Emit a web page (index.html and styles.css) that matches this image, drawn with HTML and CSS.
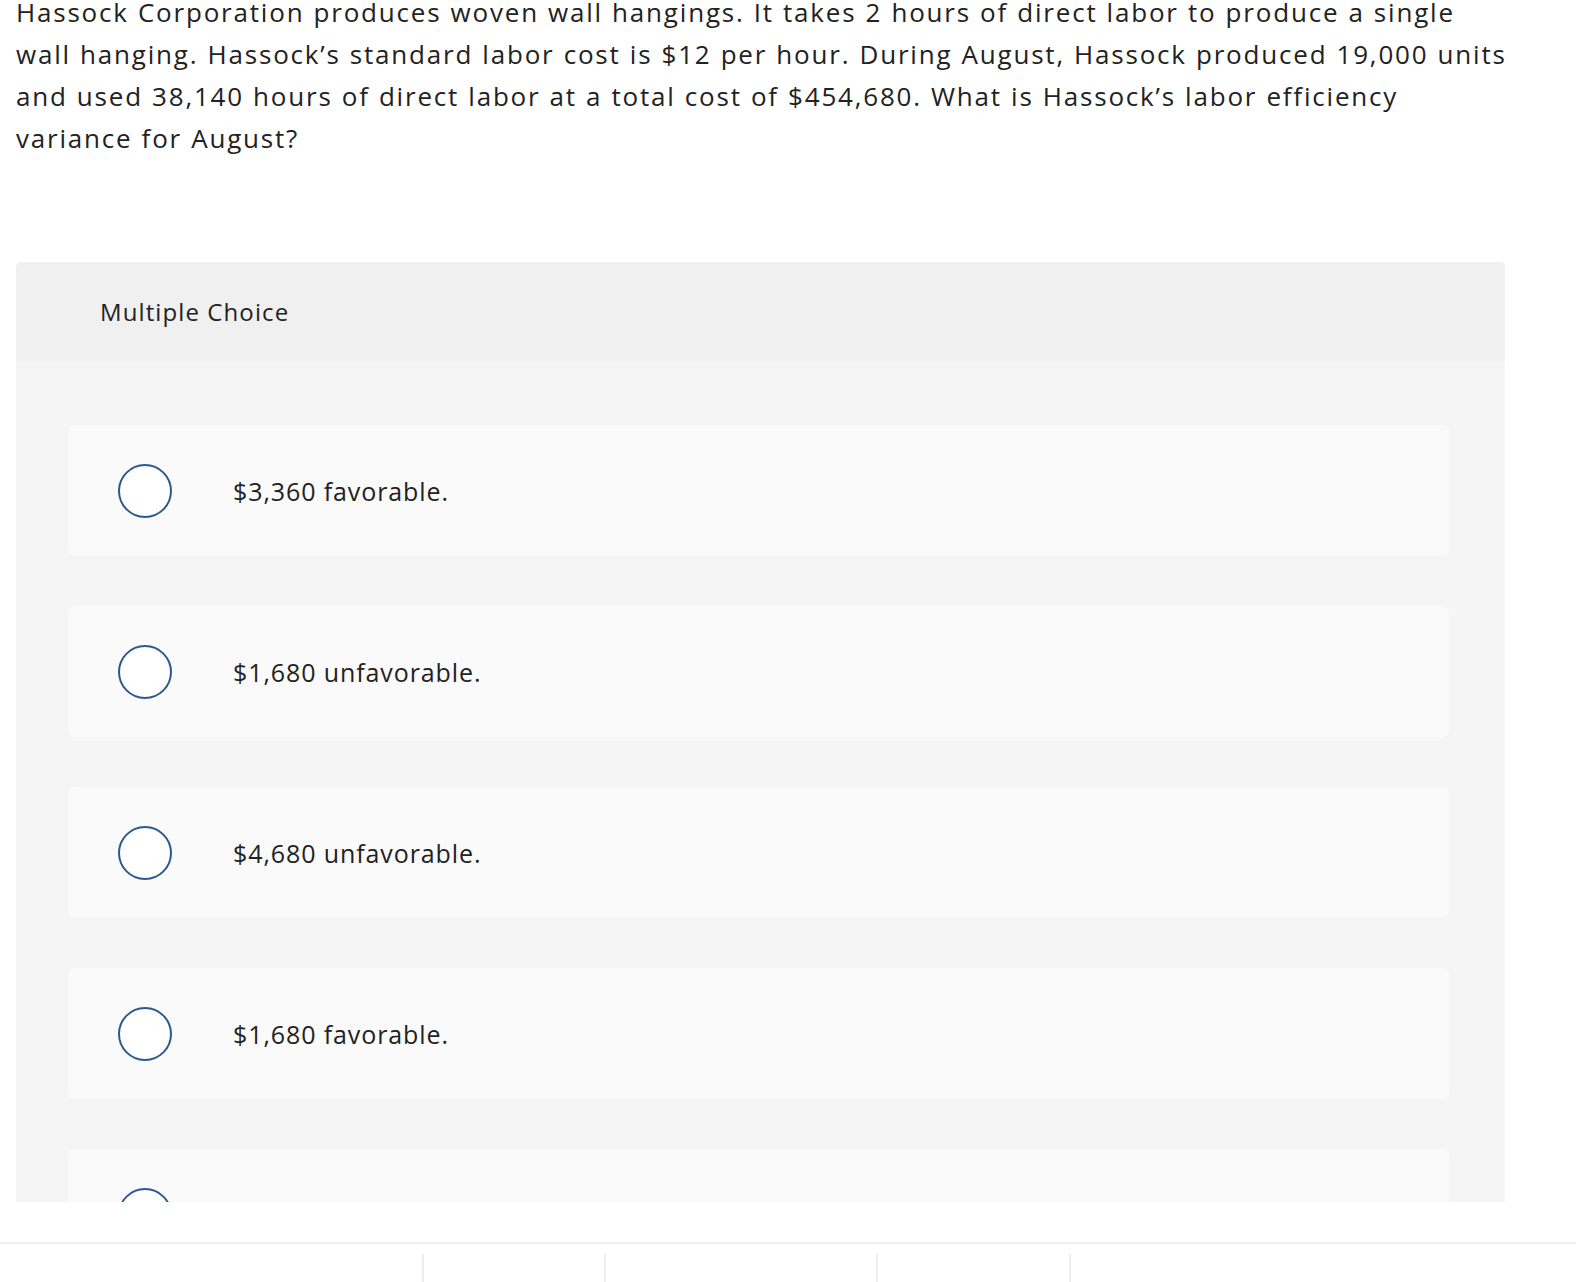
FILE: index.html
```html
<!DOCTYPE html>
<html lang="en">
<head>
<meta charset="utf-8">
<title>Multiple Choice</title>
<link rel="stylesheet" href="styles.css">
</head>
<body>
<main class="page">
  <p class="question">Hassock Corporation produces woven wall hangings. It takes 2 hours of direct labor to produce a single wall hanging. Hassock’s standard labor cost is $12 per hour. During August, Hassock produced 19,000 units and used 38,140 hours of direct labor at a total cost of $454,680. What is Hassock’s labor efficiency variance for August?</p>

  <section class="card">
    <header class="card-head">Multiple Choice</header>
    <div class="card-body">
      <label class="option"><span class="radio"></span><span class="opt-text">$3,360 favorable.</span></label>
      <label class="option"><span class="radio"></span><span class="opt-text">$1,680 unfavorable.</span></label>
      <label class="option"><span class="radio"></span><span class="opt-text">$4,680 unfavorable.</span></label>
      <label class="option"><span class="radio"></span><span class="opt-text">$1,680 favorable.</span></label>
      <label class="option"><span class="radio"></span><span class="opt-text">$3,360 unfavorable.</span></label>
    </div>
  </section>
</main>
<footer class="footer">
  <div class="foot-cell w1"></div>
  <div class="foot-cell w2"></div>
  <div class="foot-cell w3"></div>
  <div class="foot-cell w4"></div>
</footer>
</body>
</html>
```

FILE: styles.css
```css
html, body {
  margin: 0;
  padding: 0;
  background: #ffffff;
  height: 1282px;
  overflow: hidden;
}

body {
  font-family: "Open Sans", "Lato", sans-serif;
  color: #222222;
}

.page {
  width: 1489px;
  margin-left: 16px;
}

.question {
  width: 1500px;
  margin: -9px 0 0 0;
  font-size: 26px;
  letter-spacing: 1.8px;
  word-spacing: 0.6px;
  line-height: 42px;
  color: #222222;
}

.card {
  margin-top: 103px;
  height: 940px;
  overflow: hidden;
  border-radius: 5px 5px 0 0;
  background: #f5f5f5;
}

.card-head {
  height: 99px;
  background: #f0f0f0;
  display: flex;
  align-items: center;
  padding-left: 84px;
  font-size: 24px;
  letter-spacing: 1.1px;
  color: #222222;
}

.card-body {
  padding: 64px 56px 0 52px;
  display: flex;
  flex-direction: column;
  gap: 50px;
}

.option {
  flex: none;
  height: 131px;
  background: #fafafa;
  border-radius: 6px;
  display: flex;
  align-items: center;
  padding-left: 50px;
}

.radio {
  flex: none;
  width: 50px;
  height: 50px;
  border: 2px solid #2c5791;
  border-radius: 50%;
  background: #ffffff;
}

.opt-text {
  margin-left: 61px;
  font-size: 25px;
  letter-spacing: 0.9px;
  color: #222222;
}

.footer {
  margin-top: 40px;
  border-top: 2px solid #eeeeee;
  padding-top: 10px;
  padding-left: 422px;
  display: flex;
  height: 40px;
}

.foot-cell {
  border-left: 2px solid #eeeeee;
  height: 40px;
}

.w1 { width: 180px; }
.w2 { width: 270px; }
.w3 { width: 191px; }
.w4 { width: 100px; }
```
